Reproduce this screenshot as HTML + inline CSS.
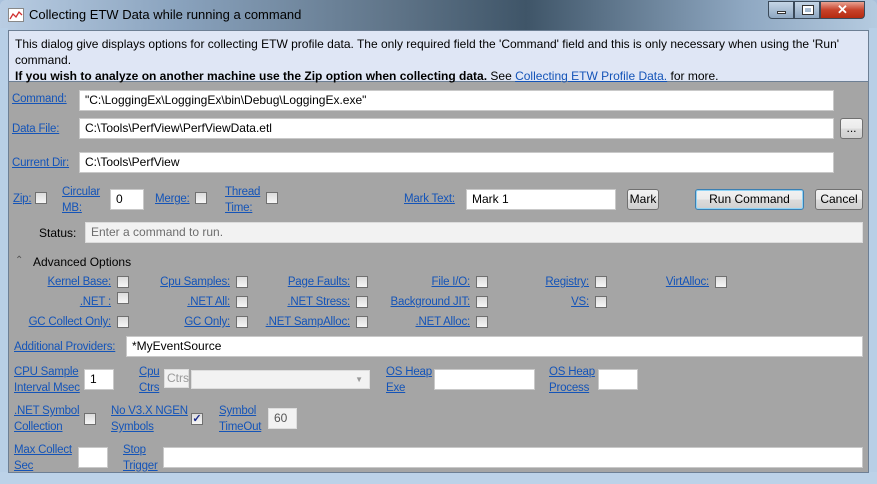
<!DOCTYPE html>
<html><head><style>
*{box-sizing:border-box;margin:0;padding:0}
body{width:877px;height:484px;overflow:hidden;font-family:"Liberation Sans",sans-serif;font-size:12px;color:#000;position:relative;background:#a9c1dc}
.frame{position:absolute;left:0;top:0;width:877px;height:484px;background:linear-gradient(90deg,#b9cde3 0%,#8aa3be 20%,#5f7488 45%,#3f5568 60%,#8fa8c2 85%,#b5cbe0 100%);border-radius:6px 6px 0 0}
.bot{position:absolute;left:0;top:472px;width:877px;height:12px;background:#bcd2e8}
.lf{position:absolute;left:0;top:28px;width:8px;height:450px;background:#b8cfe6}
.rf{position:absolute;left:869px;top:28px;width:8px;height:450px;background:#b8cfe6}
.title{position:absolute;left:29px;top:7px;font-size:13px;color:#000}
.client{position:absolute;left:8px;top:30px;width:861px;height:443px;background:#a5a5a5;border:1px solid #6d7f94}
.info{position:absolute;left:8px;top:30px;width:861px;height:52px;background:#dfe6f5;border:1px solid #6d7f94;padding:5px 6px;line-height:16px;font-size:12px}
.a{position:absolute;color:#1454b8;text-decoration:underline;white-space:nowrap;line-height:16px;font-size:11.5px;letter-spacing:-0.2px}
.r{text-align:right}
.in{position:absolute;background:#fff;border:1px solid #c9c9c9;padding:2px 5px;line-height:15px;white-space:nowrap;height:21px}
.cb{position:absolute;width:12px;height:12px;border:1px solid #707070;background:linear-gradient(#dcdcdc,#f6f6f6)}
.btn{position:absolute;border:1px solid #707070;border-radius:3px;background:linear-gradient(#f2f2f2,#ebebeb 50%,#dcdcdc 50%,#cfcfcf);text-align:center;line-height:19px;height:21px}
.t{position:absolute;white-space:nowrap;line-height:16px}
</style></head><body>
<div class="frame"></div>
<div class="lf"></div><div class="rf"></div><div class="bot"></div>
<svg style="position:absolute;left:8px;top:8px" width="16" height="14"><rect x="0.5" y="0.5" width="15" height="13" fill="#fff" stroke="#888"/><polyline points="2,11 5,6 8,9 11,4 14,7" fill="none" stroke="#d03030" stroke-width="1.3"/></svg>
<div class="title">Collecting ETW Data while running a command</div>
<div style="position:absolute;left:768px;top:1px;width:26px;height:18px;border:1px solid #3b4a5a;border-radius:0 0 0 4px;background:linear-gradient(#c5d5e6,#8ea7c1)"><div style="position:absolute;left:8px;top:9px;width:9px;height:3px;background:#fff;border:1px solid #333"></div></div>
<div style="position:absolute;left:794px;top:1px;width:26px;height:18px;border:1px solid #3b4a5a;background:linear-gradient(#c5d5e6,#8ea7c1)"><div style="position:absolute;left:8px;top:4px;width:10px;height:8px;border:2px solid #fff;outline:1px solid #333"></div></div>
<div style="position:absolute;left:820px;top:1px;width:45px;height:18px;border:1px solid #3b4a5a;border-radius:0 0 4px 0;background:linear-gradient(#e8a393,#c7422a 50%,#b52a10);color:#fff;font-weight:bold;text-align:center;font-size:13px;line-height:16px">✕</div>
<div class="client"></div>
<div class="info">This dialog give displays options for collecting ETW profile data. The only required field the 'Command' field and this is only necessary when using the 'Run' command.<br><b>If you wish to analyze on another machine use the Zip option when collecting data.</b> See <span style="color:#1454b8;text-decoration:underline">Collecting ETW Profile Data.</span> for more.</div>

<div class="a" style="left:12px;top:91px">Command:</div>
<div class="in" style="left:79px;top:90px;width:755px">"C:\LoggingEx\LoggingEx\bin\Debug\LoggingEx.exe"</div>
<div class="a" style="left:12px;top:121px">Data File:</div>
<div class="in" style="left:79px;top:118px;width:755px">C:\Tools\PerfView\PerfViewData.etl</div>
<div class="btn" style="left:840px;top:118px;width:23px">...</div>
<div class="a" style="left:12px;top:155px">Current Dir:</div>
<div class="in" style="left:79px;top:152px;width:755px">C:\Tools\PerfView</div>

<div class="a" style="left:13px;top:191px">Zip:</div><div class="cb" style="left:35px;top:192px"></div>
<div class="a" style="left:62px;top:184px">Circular<br>MB:</div>
<div class="in" style="left:110px;top:189px;width:34px">0</div>
<div class="a" style="left:155px;top:191px">Merge:</div><div class="cb" style="left:195px;top:192px"></div>
<div class="a" style="left:225px;top:184px">Thread<br>Time:</div><div class="cb" style="left:266px;top:192px"></div>
<div class="a" style="left:404px;top:191px">Mark Text:</div>
<div class="in" style="left:466px;top:189px;width:150px">Mark 1</div>
<div class="btn" style="left:627px;top:189px;width:32px">Mark</div>
<div class="btn" style="left:695px;top:189px;width:109px;border-color:#3c7fb1;box-shadow:0 0 0 1px #8fd3f5 inset">Run Command</div>
<div class="btn" style="left:815px;top:189px;width:48px">Cancel</div>

<div class="t" style="left:39px;top:225px">Status:</div>
<div class="in" style="left:85px;top:222px;width:778px;background:#f2f2f2;border-color:#dcdcdc;color:#6d6d6d">Enter a command to run.</div>

<div class="t" style="left:15px;top:253px;color:#555;font-size:10px">⌃</div>
<div class="t" style="left:33px;top:254px">Advanced Options</div>

<div class="a r" style="right:766px;top:274px">Kernel Base:</div><div class="cb" style="left:117px;top:276px"></div>
<div class="a r" style="right:647px;top:274px">Cpu Samples:</div><div class="cb" style="left:236px;top:276px"></div>
<div class="a r" style="right:527px;top:274px">Page Faults:</div><div class="cb" style="left:356px;top:276px"></div>
<div class="a r" style="right:407px;top:274px">File I/O:</div><div class="cb" style="left:476px;top:276px"></div>
<div class="a r" style="right:288px;top:274px">Registry:</div><div class="cb" style="left:595px;top:276px"></div>
<div class="a r" style="right:168px;top:274px">VirtAlloc:</div><div class="cb" style="left:715px;top:276px"></div>

<div class="a r" style="right:766px;top:294px">.NET :</div><div class="cb" style="left:117px;top:292px"></div>
<div class="a r" style="right:647px;top:294px">.NET All:</div><div class="cb" style="left:236px;top:296px"></div>
<div class="a r" style="right:527px;top:294px">.NET Stress:</div><div class="cb" style="left:356px;top:296px"></div>
<div class="a r" style="right:407px;top:294px">Background JIT:</div><div class="cb" style="left:476px;top:296px"></div>
<div class="a r" style="right:288px;top:294px">VS:</div><div class="cb" style="left:595px;top:296px"></div>

<div class="a r" style="right:766px;top:314px">GC Collect Only:</div><div class="cb" style="left:117px;top:316px"></div>
<div class="a r" style="right:647px;top:314px">GC Only:</div><div class="cb" style="left:236px;top:316px"></div>
<div class="a r" style="right:527px;top:314px">.NET SampAlloc:</div><div class="cb" style="left:356px;top:316px"></div>
<div class="a r" style="right:407px;top:314px">.NET Alloc:</div><div class="cb" style="left:476px;top:316px"></div>

<div class="a" style="left:14px;top:339px">Additional Providers:</div>
<div class="in" style="left:126px;top:336px;width:737px">*MyEventSource</div>

<div class="a" style="left:14px;top:364px">CPU Sample<br>Interval Msec</div>
<div class="in" style="left:84px;top:369px;width:30px">1</div>
<div class="a" style="left:139px;top:364px">Cpu<br>Ctrs</div>
<div class="in" style="left:164px;top:369px;width:25px;height:19px;padding:1px 2px;color:#999;background:#f2f2f2;border-color:#ddd">Ctrs</div>
<div class="in" style="left:191px;top:370px;width:179px;height:19px;background:#f2f2f2;border-color:#ddd"><span style="position:absolute;right:6px;top:1px;color:#999;font-size:8px">▼</span></div>
<div class="a" style="left:386px;top:364px">OS Heap<br>Exe</div>
<div class="in" style="left:434px;top:369px;width:101px"></div>
<div class="a" style="left:549px;top:364px">OS Heap<br>Process</div>
<div class="in" style="left:598px;top:369px;width:40px"></div>

<div class="a" style="left:14px;top:403px">.NET Symbol<br>Collection</div>
<div class="cb" style="left:84px;top:413px"></div>
<div class="a" style="left:111px;top:403px">No V3.X NGEN<br>Symbols</div>
<div class="cb" style="left:191px;top:413px;color:#1a2a8a;font-size:11px;line-height:10px;text-align:center;font-weight:bold">✓</div>
<div class="a" style="left:219px;top:403px">Symbol<br>TimeOut</div>
<div class="in" style="left:268px;top:408px;width:29px;background:#f2f2f2;border-color:#ddd;color:#555">60</div>

<div class="a" style="left:14px;top:442px">Max Collect<br>Sec</div>
<div class="in" style="left:78px;top:447px;width:30px"></div>
<div class="a" style="left:123px;top:442px">Stop<br>Trigger</div>
<div class="in" style="left:163px;top:447px;width:700px"></div>
</body></html>
